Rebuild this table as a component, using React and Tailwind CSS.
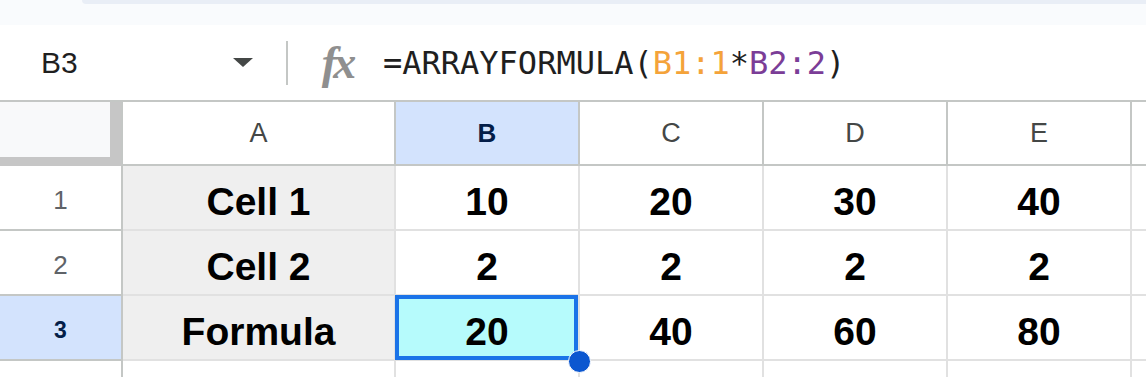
import React from "react";

const cols = ["A", "B", "C", "D", "E"];
const data = [
  ["Cell 1", "10", "20", "30", "40"],
  ["Cell 2", "2", "2", "2", "2"],
  ["Formula", "20", "40", "60", "80"],
];

export default function App() {
  return (
    <div className="w-[1146px] h-[377px] overflow-hidden bg-white" style={{ fontFamily: '"Liberation Sans", Arial, sans-serif' }}>
      {/* top strip */}
      <div className="h-[25px] bg-[#f9fbfd]">
        <div className="ml-[82px] h-[4px] bg-[#e9eef6] rounded-bl-[6px]" />
      </div>

      {/* formula bar */}
      <div className="h-[75px] flex items-center bg-white">
        <div className="w-[286px] flex items-center pl-[41px] pr-[33px]">
          <span className="text-[30px] leading-none text-[#1f1f1f]">B3</span>
          <div className="ml-auto w-0 h-0 border-l-[10px] border-r-[10px] border-t-[9px] border-l-transparent border-r-transparent border-t-[#444746]" />
        </div>
        <div className="w-[2px] h-[44px] bg-[#c4c7c5]" />
        <div className="ml-[28px] w-[42px] flex items-center justify-center">
          <span className="text-[46px] leading-none italic font-bold text-[#8f8f8f] tracking-[-4px]" style={{ fontFamily: '"Liberation Serif", "Times New Roman", serif' }}>fx</span>
        </div>
        <div className="ml-[25px] text-[32px] leading-none text-[#1f1f1f] whitespace-pre" style={{ fontFamily: '"DejaVu Sans Mono", monospace' }}>
          =ARRAYFORMULA(<span className="text-[#f4a33a]">B1:1</span>*<span className="text-[#7b3d97]">B2:2</span>)
        </div>
      </div>

      {/* grid */}
      <div className="border-t-2 border-[#c4c7c5] grid grid-cols-[123px_273px_184px_184px_184px_184px_1fr] grid-rows-[64px_65px_65px_65px_1fr] h-[277px]">
        {/* header row */}
        <div className="bg-[#c6c6c6] border-r-2 border-[#c4c7c5]">
          <div className="w-[110px] h-[55px] bg-[#f8f9fa]" />
        </div>
        {cols.map((c) => (
          <div
            key={c}
            className={
              c === "B"
                ? "flex items-center justify-center border-r-2 border-b-2 border-[#c4c7c5] bg-[#d3e3fd] text-[#041e49] font-bold text-[26px]"
                : "flex items-center justify-center border-r-2 border-b-2 border-[#c4c7c5] bg-white text-[#444746] text-[27px]"
            }
          >
            {c}
          </div>
        ))}
        <div className="border-b-2 border-[#c4c7c5]" />

        {/* data rows */}
        {data.map((row, ri) => (
          <React.Fragment key={ri}>
            <div
              className={
                ri === 2
                  ? "flex items-center justify-center pt-[6px] border-r-2 border-b-2 border-[#c4c7c5] bg-[#d3e3fd] text-[#041e49] font-bold text-[23px]"
                  : "flex items-center justify-center pt-[6px] border-r-2 border-b-2 border-[#c4c7c5] bg-white text-[#5f6368] text-[26px]"
              }
            >
              {ri + 1}
            </div>
            {row.map((v, ci) => {
              const selected = ri === 2 && ci === 1;
              return (
                <div
                  key={ci}
                  className={
                    (ci === 0 ? "bg-[#efefef] " : selected ? "bg-[#b6fbfc] relative z-10 " : "bg-white ") +
                    "flex items-center justify-center pt-[9px] border-r-2 border-b-2 border-[#e1e1e1] text-[39px] font-bold text-black"
                  }
                >
                  {v}
                  {selected && (
                    <div className="absolute -left-[1px] -top-[1px] right-0 -bottom-[1px] border-[4px] border-[#1a73e8]">
                      <div className="absolute -right-[17px] -bottom-[17px] w-[23px] h-[23px] rounded-full bg-[#0b57d0] border border-white" />
                    </div>
                  )}
                </div>
              );
            })}
            <div className="border-b-2 border-[#e1e1e1]" />
          </React.Fragment>
        ))}

        {/* partial row 4 */}
        <div className="border-r-2 border-[#c4c7c5] bg-white" />
        <div className="border-r-2 border-[#e1e1e1]" />
        <div className="border-r-2 border-[#e1e1e1]" />
        <div className="border-r-2 border-[#e1e1e1]" />
        <div className="border-r-2 border-[#e1e1e1]" />
        <div className="border-r-2 border-[#e1e1e1]" />
        <div />
      </div>
    </div>
  );
}
